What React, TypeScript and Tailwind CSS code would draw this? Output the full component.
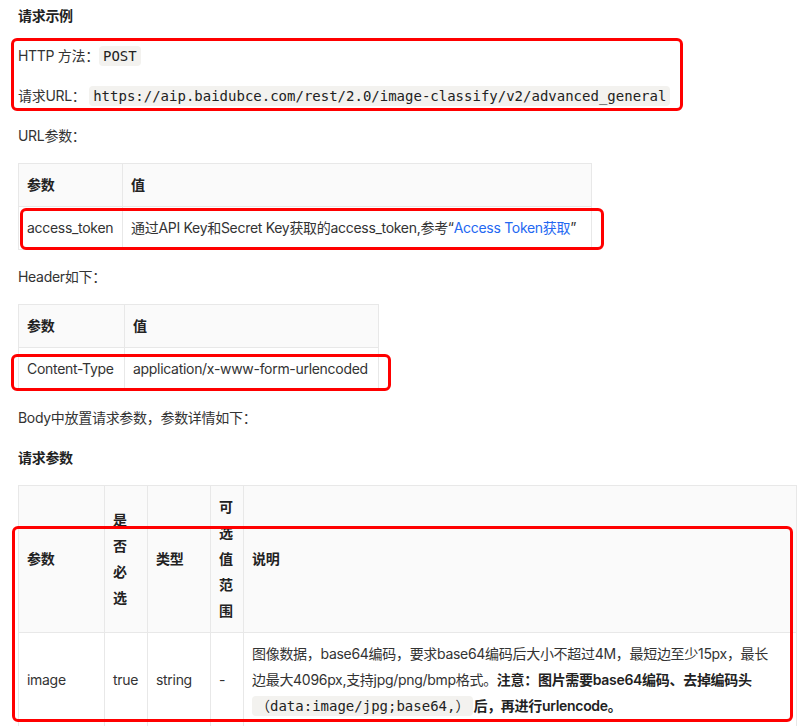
const sans = "font-['Inter','Noto_Sans_CJK_SC',sans-serif]";

function Code({ children }: { children: React.ReactNode }) {
  return (
    <code className="rounded-[4px] bg-[#f3f2ef] px-[4px] py-[2px] font-['DejaVu_Sans_Mono','Noto_Sans_CJK_SC',monospace] text-[14px] font-normal tracking-normal text-[#222]">
      {children}
    </code>
  );
}

const cell = "whitespace-nowrap border border-[#e8e8e8] px-2 py-2 align-middle text-left leading-[26px]";
const head = `${cell} bg-[#fafafa] font-semibold text-[#222]`;
const wrapHead = "border border-[#e8e8e8] px-2 py-2 align-middle text-left leading-[26px] bg-[#fafafa] font-semibold text-[#222]";

function Mark({ className }: { className: string }) {
  return <div className={`pointer-events-none absolute rounded-[6px] border-[3px] border-[#ff0000] ${className}`} />;
}

export default function App() {
  return (
    <div className={`relative h-[726px] w-[807px] overflow-hidden bg-white pl-[18px] pt-[3px] text-[14px] leading-[26px] tracking-[-0.3px] text-[#333] ${sans}`}>
      <p className="mb-[14px] font-semibold text-[#222]">请求示例</p>
      <p className="mb-[14px]">
        HTTP 方法：<Code>POST</Code>
      </p>
      <p className="mb-[14px]">
        请求URL： <Code>https://aip.baidubce.com/rest/2.0/image-classify/v2/advanced_general</Code>
      </p>
      <p className="mb-[14px]">URL参数：</p>

      <table className="mb-[14px] w-[574px] table-fixed">
        <colgroup>
          <col className="w-[104px]" />
          <col />
        </colgroup>
        <thead>
          <tr>
            <th className={head}>参数</th>
            <th className={head}>值</th>
          </tr>
        </thead>
        <tbody>
          <tr>
            <td className={cell}>access_token</td>
            <td className={cell}>
              通过API Key和Secret Key获取的access_token,参考“<span className="text-[#2468f2]">Access Token获取</span>”
            </td>
          </tr>
        </tbody>
      </table>

      <p className="mb-[14px]">Header如下：</p>

      <table className="mb-[14px] w-[361px] table-fixed">
        <colgroup>
          <col className="w-[106px]" />
          <col />
        </colgroup>
        <thead>
          <tr>
            <th className={head}>参数</th>
            <th className={head}>值</th>
          </tr>
        </thead>
        <tbody>
          <tr>
            <td className={cell}>Content-Type</td>
            <td className={cell}>application/x-www-form-urlencoded</td>
          </tr>
        </tbody>
      </table>

      <p className="mb-[14px]">Body中放置请求参数，参数详情如下：</p>
      <p className="mb-[14px] font-semibold text-[#222]">请求参数</p>

      <table className="w-[779px] table-fixed">
        <colgroup>
          <col className="w-[86px]" />
          <col className="w-[43px]" />
          <col className="w-[63px]" />
          <col className="w-[33px]" />
          <col />
        </colgroup>
        <thead>
          <tr>
            <th className={head}>参数</th>
            <th className={wrapHead}>是否必选</th>
            <th className={head}>类型</th>
            <th className={wrapHead}>可选值范围</th>
            <th className={head}>说明</th>
          </tr>
        </thead>
        <tbody>
          <tr>
            <td className={cell}>image</td>
            <td className={cell}>true</td>
            <td className={cell}>string</td>
            <td className={cell}>-</td>
            <td className={cell}>
              图像数据，base64编码，要求base64编码后大小不超过4M，最短边至少15px，最长
              <br />
              边最大4096px,支持jpg/png/bmp格式。<b className="font-semibold text-[#222]">注意：图片需要base64编码、去掉编码头</b>
              <br />
              <Code>（data:image/jpg;base64,）</Code>
              <b className="font-semibold text-[#222]">后，再进行urlencode。</b>
            </td>
          </tr>
        </tbody>
      </table>

      <Mark className="left-[11px] top-[38px] h-[73px] w-[672px]" />
      <Mark className="left-[20px] top-[208px] h-[42px] w-[584px]" />
      <Mark className="left-[11px] top-[354px] h-[37px] w-[380px]" />
      <Mark className="left-[12px] top-[526px] h-[196px] w-[781px]" />
    </div>
  );
}
